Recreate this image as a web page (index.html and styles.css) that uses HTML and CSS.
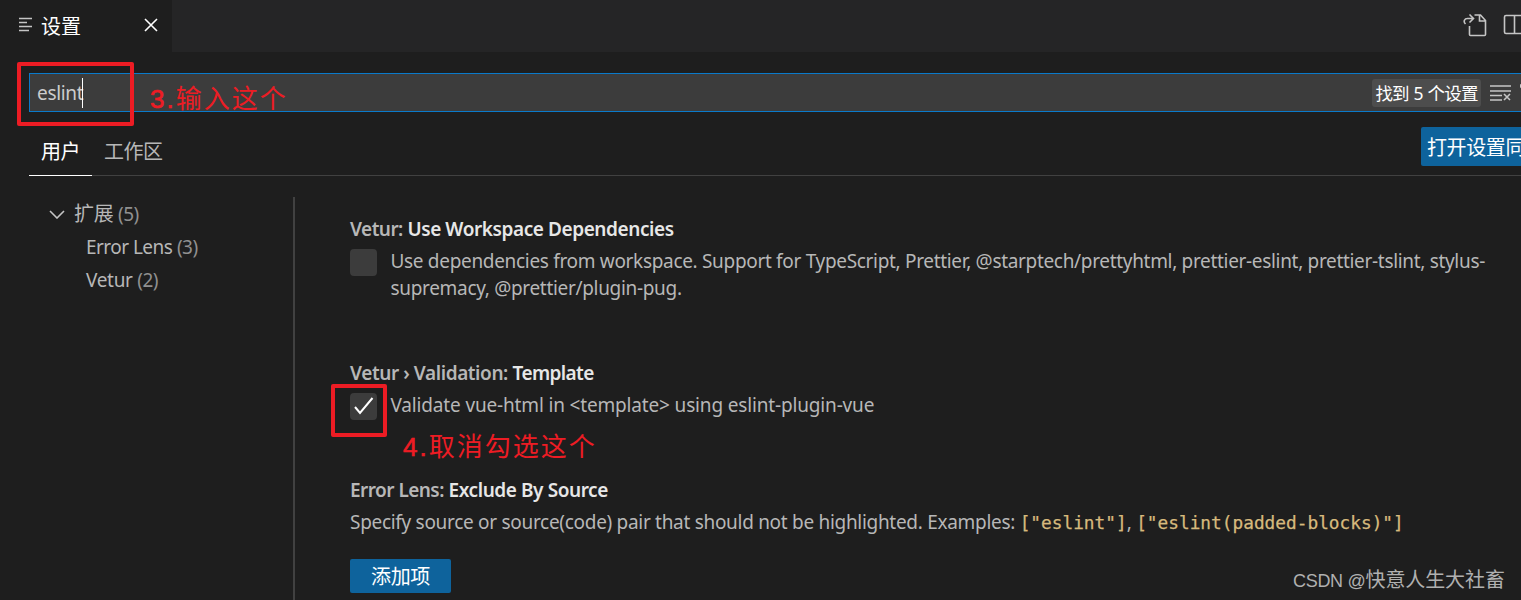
FILE: index.html
```html
<!DOCTYPE html>
<html lang="zh-CN">
<head>
  <meta charset="utf-8">
  <title>设置</title>
  <link rel="stylesheet" href="styles.css">
</head>
<body>
  <div class="tabs">
    <div class="tab">
      <svg class="tab-icon" width="14" height="15" viewBox="0 0 14 15"><path d="M0 1.500h13M0 5.500h8M0 9.500h13M0 13.500h10"/></svg>
      <span class="tab-name">设置</span>
      <svg class="close" width="14" height="14" viewBox="0 0 14 14"><path d="M1 1l12 12M13 1L1 13"/></svg>
    </div>
    <div class="actions">
      <svg width="24" height="24" viewBox="0 0 24 24"><path d="M6.500 13v8.500q0 1 1 1h14q1 0 1-1V7.500l-5-5.500H11.500M16.500 2v6h6M2.500 11C0 8.500 1.500 5.500 4.500 5.500H10M6.500 1.500l4 4-4 4"/></svg>
      <svg width="24" height="24" viewBox="0 0 24 24"><path d="M3 2.500h19v18H3q-1.500 0-1.500-1.500V4Q1.500 2.500 3 2.500zM11.500 2.500v18"/></svg>
    </div>
  </div>

  <div class="header">
    <div class="search">
      <span class="query">eslint</span><span class="cursor"></span>
      <span class="count">找到 5 个设置</span>
      <svg class="clear" width="22" height="18" viewBox="0 0 22 18"><path d="M0 2h21M0 7h21M0 11.500h12M0 16h12M14 10l6 6M20 10l-6 6"/></svg>
      <svg class="filter" width="22" height="18" viewBox="0 0 22 18"><path d="M0 1h20l-8 9v7H8v-7L0 2z"/></svg>
    </div>
    <div class="scope">
      <span class="scope-item on">用户</span>
      <span class="scope-item">工作区</span>
      <button class="btn sync">打开设置同步</button>
    </div>
  </div>

  <div class="main">
    <div class="toc">
      <div class="toc-row"><svg class="chevron" width="16" height="9" viewBox="0 0 16 9"><path d="M1 1l7 7 7-7"/></svg><span class="cn">扩展</span> <i class="num">(5)</i></div>
      <div class="toc-row sub"><span class="s5">Error Lens</span> <i class="num">(3)</i></div>
      <div class="toc-row sub">Vetur <i class="num">(2)</i></div>
    </div>
    <div class="list">
      <div class="item first">
        <div class="title"><span class="s5">Vetur:</span> <b class="s4">Use Workspace Dependencies</b></div>
        <div class="row">
          <span class="check"></span>
          <div class="desc">Use dependencies from workspace. Support for TypeScript, Prettier, @starptech/prettyhtml, prettier-eslint, prettier-tslint, stylus-<br>supremacy, @prettier/plugin-pug.</div>
        </div>
      </div>
      <div class="item second">
        <div class="title"><span class="s4">Vetur › Validation:</span> <b class="s6">Template</b></div>
        <div class="row">
          <span class="check"><svg width="20" height="18" viewBox="0 0 20 18"><path d="M1 10l5 6L18.500 1"/></svg></span>
          <div class="desc s1">Validate vue-html in &lt;template&gt; using eslint-plugin-vue</div>
        </div>
      </div>
      <div class="item third">
        <div class="title"><span class="s5">Error Lens:</span> <b class="s4">Exclude By Source</b></div>
        <div class="desc s3">Specify source or source(code) pair that should not be highlighted. Examples: <code>["eslint"]</code>, <code>["eslint(padded-blocks)"]</code></div>
        <button class="btn add">添加项</button>
      </div>
    </div>
  </div>

  <div class="mark mark-search"></div>
  <div class="note note-search"><b>3.</b>输入这个</div>
  <div class="mark mark-check"></div>
  <div class="note note-check"><b>4.</b>取消勾选这个</div>
  <div class="watermark"><span>CSDN @</span>快意人生大社畜</div>
</body>
</html>
```
FILE: styles.css
```css
*{
  box-sizing: border-box;
}
body{
  margin: 0;
  width: 1521px;
  height: 600px;
  overflow: hidden;
  position: relative;
  background: #1e1e1e;
  color: #b7b7b7;
  font: 19px/27px "Noto Sans","Noto Sans CJK SC",sans-serif;
  letter-spacing: -.32px;
}
svg{
  fill: none;
  stroke: #c5c5c5;
  stroke-width: 1.600;
  flex: none;
}
i{
  font-style: normal;
}
/* tracking */
.s1{
  letter-spacing: -.16px;
}
.s3{
  letter-spacing: -.3px;
}
.s4{
  letter-spacing: -.42px;
}
.s5{
  letter-spacing: -.54px;
}
.s6{
  letter-spacing: -.62px;
}
.tabs{
  height: 52px;
  display: flex;
  justify-content: space-between;
  background: #252526;
}
.tab{
  width: 172px;
  display: flex;
  align-items: center;
  padding: 0 14px 2px 19px;
  background: #1e1e1e;
  color: #fff;
}
.tab-icon{
  margin-bottom: 1px;
}
.tab-name{
  margin: 2px 0 0 8px;
  font-size: 20px;
  letter-spacing: 0;
}
.close{
  margin-left: auto;
  stroke: #fff;
}
.actions{
  display: flex;
  gap: 16px;
  margin-right: -6px;
  padding-top: 13px;
}
.header{
  height: 124px;
  padding: 21px 0 0 29px;
}
.search{
  width: 1520px;
  height: 39px;
  display: flex;
  align-items: center;
  padding-left: 7px;
  border: 1px solid #0a7aca;
  background: #3c3c3c;
  color: #ccc;
}
.query{
  width: 45px;
  padding-top: 2px;
  white-space: nowrap;
}
.cursor{
  width: 1px;
  height: 30px;
  background: #fff;
}
.count{
  width: 109px;
  height: 28px;
  margin-left: 1289px;
  border-radius: 3px;
  background: #4d4d4d;
  color: #fff;
  text-align: center;
  white-space: nowrap;
  font-size: 17.500px;
  line-height: 29px;
  letter-spacing: -.8px;
  word-spacing: 1px;
}
.clear{
  margin-left: 9px;
}
.filter{
  margin-left: 8px;
}
.scope{
  height: 64px;
  display: flex;
  border-bottom: 1px solid #414141;
  font-size: 20px;
}
.scope-item{
  height: 64px;
  padding: 0 12px;
  line-height: 79px;
  letter-spacing: -.5px;
}
.scope-item.on{
  width: 63px;
  border-bottom: 1px solid #fff;
  color: #fff;
}
.btn{
  border: 0;
  border-radius: 2px;
  background: #0e639c;
  color: #fff;
  font: 20px "Noto Sans CJK SC",sans-serif;
  letter-spacing: -.4px;
  white-space: nowrap;
}
.sync{
  width: 130px;
  height: 39px;
  margin: 15px -30px 0 auto;
  padding: 0 6px;
  text-align: left;
}
.main{
  height: 424px;
  display: flex;
}
.toc{
  width: 295px;
  margin-top: 21px;
  border-right: 2px solid #414141;
}
.toc-row{
  height: 33px;
  line-height: 33px;
  padding-left: 49px;
}
.toc-row.sub{
  padding-left: 86px;
  line-height: 35px;
}
.chevron{
  margin-right: 9px;
  vertical-align: 2px;
}
.cn{
  font-size: 20px;
}
.num{
  color: #909090;
  letter-spacing: -.5px;
}
.list{
  padding-left: 55px;
  white-space: nowrap;
}
.item.first{
  height: 184px;
  padding-top: 40px;
}
.item.second{
  height: 117px;
}
.title{
  height: 32px;
  font-weight: 600;
}
.title b{
  font-weight: 600;
  color: #e7e7e7;
}
.row{
  display: flex;
}
.check{
  width: 27px;
  height: 27px;
  margin: 1px 13.500px 0 0;
  padding: 4px;
  border-radius: 4px;
  background: #3c3c3c;
}
.check svg{
  display: block;
  stroke: #fff;
  stroke-width: 2;
}
code{
  font: 17.800px "DejaVu Sans Mono",monospace;
  letter-spacing: 0;
  color: #d7ba7d;
  -webkit-text-stroke: .25px #d7ba7d;
}
.add{
  display: block;
  width: 101px;
  height: 34px;
  margin-top: 23px;
  padding: 0 0 1px;
}
/* red annotations over the page */
.mark{
  position: absolute;
  border: 4px solid #ed1c24;
  border-radius: 2px;
}
.mark-search{
  left: 17px;
  top: 62px;
  width: 117px;
  height: 64px;
}
.mark-check{
  left: 331px;
  top: 384px;
  width: 56px;
  height: 53px;
}
.note{
  position: absolute;
  color: #ed1c24;
  font: 26px/36px "Noto Sans CJK SC",sans-serif;
  letter-spacing: 2px;
  white-space: nowrap;
}
.note b{
  font: 26px "Liberation Sans",sans-serif;
  letter-spacing: 2px;
  -webkit-text-stroke: .6px #ed1c24;
}
.note-search{
  left: 150px;
  top: 79px;
}
.note-check{
  left: 403px;
  top: 427px;
}
.watermark{
  position: absolute;
  left: 1293px;
  top: 565px;
  color: #b0b0b0;
  font: 20px/28px "Noto Sans CJK SC",sans-serif;
  letter-spacing: -.1px;
  white-space: nowrap;
}
.watermark span{
  font-family: "Liberation Sans",sans-serif;
  font-size: 18px;
  letter-spacing: -.3px;
}
```
